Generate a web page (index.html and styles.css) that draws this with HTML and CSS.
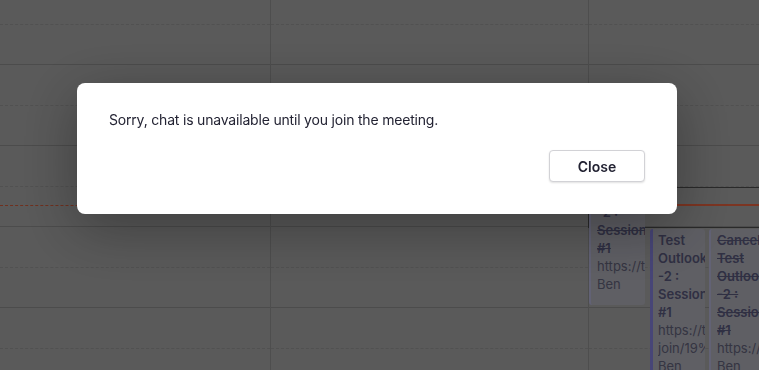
FILE: index.html
```html
<!DOCTYPE html>
<html lang="en">
<head>
<meta charset="utf-8">
<title>Calendar</title>
<link rel="stylesheet" href="styles.css">
</head>
<body>
<div class="calendar">
  <div class="day day-first">
    <div class="slot slot-top"></div>
    <div class="slot slot-a hour"></div>
    <div class="slot slot-b"></div>
    <div class="slot slot-a hour"></div>
    <div class="slot slot-b"></div>
    <div class="slot slot-a hour"></div>
    <div class="slot slot-b"></div>
    <div class="slot slot-a hour"></div>
    <div class="slot slot-b"></div>
    <div class="now-line dashed"></div>
  </div>
  <div class="day">
    <div class="slot slot-top"></div>
    <div class="slot slot-a hour"></div>
    <div class="slot slot-b"></div>
    <div class="slot slot-a hour"></div>
    <div class="slot slot-b"></div>
    <div class="slot slot-a hour"></div>
    <div class="slot slot-b"></div>
    <div class="slot slot-a hour"></div>
    <div class="slot slot-b"></div>
    <div class="now-line dashed"></div>
  </div>
  <div class="day day-today">
    <div class="slot slot-top"></div>
    <div class="slot slot-a hour"></div>
    <div class="slot slot-b"></div>
    <div class="slot slot-a hour"></div>
    <div class="slot slot-b"></div>
    <div class="slot slot-a hour"></div>
    <div class="slot slot-b"></div>
    <div class="slot slot-a hour"></div>
    <div class="slot slot-b"></div>
    <div class="slot-highlight"></div>
    <div class="now-line solid"></div>

    <div class="event canceled ev-1">
      <div class="ev-title">Canceled: Test Outlook -2 : Session #1</div>
      <div class="ev-url">https://teams.microsoft.com</div>
      <div class="ev-owner">Ben</div>
    </div>
    <div class="event ev-2">
      <div class="ev-title">Test Outlook -2 : Session #1</div>
      <div class="ev-url">https://teams.microsoft.com/l/meetup-join/19%3ameeting</div>
      <div class="ev-owner">Ben</div>
    </div>
    <div class="event canceled ev-3">
      <div class="ev-title">Canceled: Test Outlook -2 : Session #1</div>
      <div class="ev-url">https://teams.microsoft.com</div>
      <div class="ev-owner">Ben</div>
    </div>
  </div>
</div>

<div class="backdrop">
  <div class="dialog" role="dialog">
    <p class="dialog-text">Sorry, chat is unavailable until you join the meeting.</p>
    <div class="dialog-actions">
      <button class="btn" type="button">Close</button>
    </div>
  </div>
</div>
</body>
</html>
```

FILE: styles.css
```css
* { box-sizing: border-box; }

html, body {
  margin: 0;
  padding: 0;
  width: 759px;
  height: 370px;
  overflow: hidden;
  font-family: Inter, "Noto Sans", "Liberation Sans", sans-serif;
}

.calendar {
  display: flex;
  height: 370px;
  background: #b4b4b4;
  overflow: hidden;
}

.day {
  position: relative;
  display: flex;
  flex-direction: column;
  flex: 0 0 318px;
  border-right: 1px solid #9c9c9c;
}

.day-first { flex-basis: 271px; }

.day-today {
  flex: 1 1 auto;
  border-right: none;
}

.slot {
  flex: 0 0 auto;
  border-bottom: 1px dashed #a2a2a2;
}

.slot.hour { border-bottom: 1px solid #989898; }

.slot-top { height: 25px; }
.slot-a { height: 40px; }
.slot-b { height: 41px; }

.now-line {
  position: absolute;
  left: 0;
  right: 0;
  top: 205px;
  height: 0;
}

.now-line.dashed { border-top: 1px dashed #e0603c; }
.now-line.solid { border-top: 2px solid #f86a44; top: 204px; }

.slot-highlight {
  position: absolute;
  left: -1px;
  right: -2px;
  top: 187px;
  height: 41px;
  border: 1px solid #545454;
}

.event {
  position: absolute;
  overflow: hidden;
  background: #bebec9;
  color: #606086;
  font-size: 13px;
  line-height: 18px;
  border-radius: 3px;
  padding: 2px 0 0 5px;
}

.ev-title {
  font-weight: 600;
  overflow: hidden;
}

.canceled .ev-title { text-decoration: line-through; }

.ev-url,
.ev-owner {
  font-weight: 400;
  color: #6a6a84;
  overflow: hidden;
}

.canceled .ev-url { white-space: nowrap; }

.ev-1 {
  left: 0;
  top: 147px;
  width: 56px;
  height: 158px;
  border-left: 2px solid #c4c4ea;
  padding-left: 6px;
}

.ev-2 {
  left: 61px;
  top: 229px;
  width: 55px;
  height: 200px;
  border-left: 3px solid #8e8aee;
  padding-left: 5px;
}

.ev-3 {
  left: 120px;
  top: 229px;
  width: 56px;
  height: 200px;
  border-left: 2px solid #c4c4ea;
  padding-left: 6px;
}

.backdrop {
  position: fixed;
  inset: 0;
  background: rgba(0, 0, 0, 0.5);
  display: flex;
  justify-content: center;
  align-items: flex-start;
  padding: 83px 5px 0 0;
}

.dialog {
  width: 600px;
  background: #ffffff;
  border-radius: 8px;
  padding: 27px 32px 32px 32px;
  box-shadow: 0 14px 56px rgba(0, 0, 0, 0.32);
}

.dialog-text {
  margin: 0 0 20px 0;
  font-size: 14px;
  line-height: 20px;
  letter-spacing: -0.19px;
  color: #232333;
}

.dialog-actions {
  display: flex;
  justify-content: flex-end;
}

.btn {
  width: 96px;
  height: 32px;
  padding: 0;
  border: 1px solid #d2d2d6;
  border-radius: 4px;
  background: #ffffff;
  box-shadow: 0 1px 2px rgba(0, 0, 0, 0.12);
  font-family: inherit;
  font-size: 14px;
  font-weight: 600;
  color: #232333;
  cursor: pointer;
}
```
